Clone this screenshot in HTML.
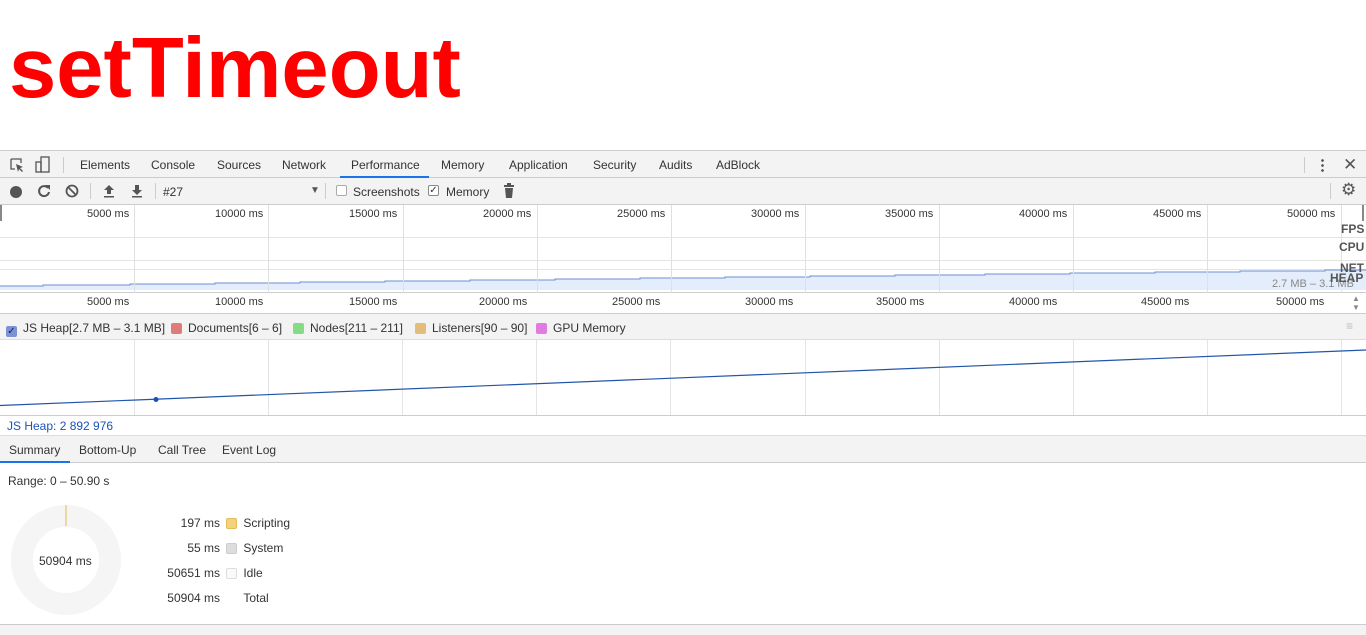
<!DOCTYPE html>
<html><head><meta charset="utf-8"><style>
*{margin:0;padding:0;box-sizing:border-box}
body{width:1366px;height:635px;overflow:hidden;background:#fff;font-family:"Liberation Sans",sans-serif;font-size:12px;color:#333;position:relative}
.abs{position:absolute}
h1{position:absolute;left:9px;top:19px;font-size:85px;font-weight:bold;color:#f00;line-height:100px;letter-spacing:0}
.bar{position:absolute;left:0;width:1366px;background:#f3f3f3;border-bottom:1px solid #ccc}
.tab{position:absolute;top:0;height:27px;line-height:27px;color:#333;font-size:12px}
.lbl{position:absolute;font-size:11px;color:#333}
.sw{display:inline-block;width:11px;height:11px;border-radius:2px;vertical-align:-2px;margin-right:6px}
</style></head><body>
<h1>setTimeout</h1>

<div class="bar" style="top:150px;height:28px;border-top:1px solid #ccc">
 <svg class="abs" style="left:9px;top:6px" width="16" height="16" viewBox="0 0 16 16"><path d="M2 2h10v4M2 2v10h4" fill="none" stroke="#555" stroke-width="1.3"/><path d="M7 7l7 3-3 1 3 3-1 1-3-3-1 3z" fill="#555"/></svg>
 <svg class="abs" style="left:35px;top:5px" width="16" height="18" viewBox="0 0 16 18"><rect x="6" y="1" width="8" height="15" fill="none" stroke="#555" stroke-width="1.3"/><rect x="1" y="6" width="5" height="10" fill="none" stroke="#555" stroke-width="1.3"/></svg>
 <div class="abs" style="left:63px;top:6px;width:1px;height:16px;background:#ccc"></div>
 <span class="tab" style="left:80px;top:1px">Elements</span>
 <span class="tab" style="left:151px;top:1px">Console</span>
 <span class="tab" style="left:217px;top:1px">Sources</span>
 <span class="tab" style="left:282px;top:1px">Network</span>
 <span class="tab" style="left:351px;top:1px">Performance</span>
 <div class="abs" style="left:340px;top:25px;width:89px;height:2px;background:#1a73e8"></div>
 <span class="tab" style="left:441px;top:1px">Memory</span>
 <span class="tab" style="left:509px;top:1px">Application</span>
 <span class="tab" style="left:593px;top:1px">Security</span>
 <span class="tab" style="left:659px;top:1px">Audits</span>
 <span class="tab" style="left:716px;top:1px">AdBlock</span>
 <div class="abs" style="left:1304px;top:6px;width:1px;height:16px;background:#ccc"></div>
 <div class="abs" style="left:1321px;top:7px;width:3px;height:14px;background:radial-gradient(circle,#555 1.2px,transparent 1.5px) 0 0/3px 5px"></div>
 <span class="tab" style="left:1343px;font-size:17px;color:#555">✕</span>
</div>

<div class="bar" style="top:178px;height:27px">
 <div class="abs" style="left:10px;top:8px;width:12px;height:12px;border-radius:50%;background:#555"></div>
 <svg class="abs" style="left:37px;top:6px" width="14" height="14" viewBox="0 0 14 14"><path d="M11 4A5 5 0 1 0 12 8" fill="none" stroke="#555" stroke-width="2"/><path d="M8 1h5v5z" fill="#555"/></svg>
 <svg class="abs" style="left:65px;top:6px" width="14" height="14" viewBox="0 0 14 14"><circle cx="7" cy="7" r="5.5" fill="none" stroke="#555" stroke-width="1.8"/><path d="M3 3l8 8" stroke="#555" stroke-width="1.8"/></svg>
 <div class="abs" style="left:90px;top:5px;width:1px;height:16px;background:#ccc"></div>
 <svg class="abs" style="left:103px;top:6px" width="12" height="14" viewBox="0 0 12 14"><path d="M6 1L1 6h3v4h4V6h3z M1 12h10v1.5H1z" fill="#555"/></svg>
 <svg class="abs" style="left:131px;top:6px" width="12" height="14" viewBox="0 0 12 14"><path d="M6 11L1 6h3V1h4v5h3z M1 12h10v1.5H1z" fill="#555"/></svg>
 <div class="abs" style="left:155px;top:5px;width:1px;height:16px;background:#ccc"></div>
 <span class="abs" style="left:163px;top:7px">#27</span>
 <span class="abs" style="left:310px;top:7px;font-size:10px;color:#555">▼</span>
 <div class="abs" style="left:325px;top:5px;width:1px;height:16px;background:#ccc"></div>
 <div class="abs" style="left:336px;top:7px;width:11px;height:11px;border:1px solid #aaa;border-radius:2px;background:#fff"></div>
 <span class="abs" style="left:353px;top:7px">Screenshots</span>
 <div class="abs" style="left:428px;top:7px;width:11px;height:11px;border:1px solid #888;border-radius:2px;background:#fff;font-size:10px;line-height:9px;text-align:center">✓</div>
 <span class="abs" style="left:446px;top:7px">Memory</span>
 <svg class="abs" style="left:503px;top:5px" width="12" height="15" viewBox="0 0 12 15"><path d="M1 2h10v2H1z M4 0h4v2H4z M2 5h8l-1 10H3z" fill="#555"/></svg>
 <div class="abs" style="left:1330px;top:5px;width:1px;height:16px;background:#ccc"></div>
 <span class="abs" style="left:1341px;top:2px;font-size:17px;color:#555">⚙</span>
</div>

<div class="abs" style="left:0;top:205px;width:1366px;height:88px;background:#fff">
 <svg class="abs" style="left:0;top:0" width="1366" height="88">
  <g stroke="#e4e4e4"><line x1="0" y1="32.5" x2="1366" y2="32.5"/><line x1="0" y1="55.5" x2="1366" y2="55.5"/><line x1="0" y1="64.5" x2="1366" y2="64.5"/></g>
  <polygon points="0,85 0,81 43,81 43,80 130,80 130,79 215,79 215,78 300,78 300,77 385,77 385,76 470,76 470,75 555,75 555,74 640,74 640,73 725,73 725,72 810,72 810,71 895,71 895,70 985,70 985,69 1070,69 1070,68 1155,68 1155,67 1240,67 1240,66 1325,66 1325,65 1366,65 1366,85" fill="#e3edfb" stroke="none"/>
  <polyline points="0,81 43,81 43,80 130,80 130,79 215,79 215,78 300,78 300,77 385,77 385,76 470,76 470,75 555,75 555,74 640,74 640,73 725,73 725,72 810,72 810,71 895,71 895,70 985,70 985,69 1070,69 1070,68 1155,68 1155,67 1240,67 1240,66 1325,66 1325,65 1366,65" fill="none" stroke="#6d8fd6" stroke-width="1"/>
  <line x1="0" y1="87.5" x2="1366" y2="87.5" stroke="#ccc"/>
  <g stroke="#e0e0e0"><line x1="134.5" y1="0" x2="134.5" y2="88"/><line x1="268.5" y1="0" x2="268.5" y2="88"/><line x1="403.5" y1="0" x2="403.5" y2="88"/><line x1="537.5" y1="0" x2="537.5" y2="88"/><line x1="671.5" y1="0" x2="671.5" y2="88"/><line x1="805.5" y1="0" x2="805.5" y2="88"/><line x1="939.5" y1="0" x2="939.5" y2="88"/><line x1="1073.5" y1="0" x2="1073.5" y2="88"/><line x1="1207.5" y1="0" x2="1207.5" y2="88"/><line x1="1341.5" y1="0" x2="1341.5" y2="88"/></g>
  <rect x="0" y="0" width="2" height="16" fill="#888"/><rect x="1362" y="0" width="2" height="16" fill="#888"/>
 </svg>
 <span class="lbl" style="left:87px;top:3px">5000 ms</span><span class="lbl" style="left:215px;top:3px">10000 ms</span><span class="lbl" style="left:349px;top:3px">15000 ms</span><span class="lbl" style="left:483px;top:3px">20000 ms</span><span class="lbl" style="left:617px;top:3px">25000 ms</span><span class="lbl" style="left:751px;top:3px">30000 ms</span><span class="lbl" style="left:885px;top:3px">35000 ms</span><span class="lbl" style="left:1019px;top:3px">40000 ms</span><span class="lbl" style="left:1153px;top:3px">45000 ms</span><span class="lbl" style="left:1287px;top:3px">50000 ms</span>
 <span class="abs" style="left:1341px;top:17px;font-size:12px;font-weight:bold;color:#555">FPS</span>
 <span class="abs" style="left:1339px;top:35px;font-size:12px;font-weight:bold;color:#555">CPU</span>
 <span class="abs" style="left:1340px;top:56px;font-size:12px;font-weight:bold;color:#555">NET</span>
 <span class="abs" style="left:1272px;top:73px;font-size:11px;color:#888;background:#e3edfb">2.7 MB – 3.1 MB</span>
 <span class="abs" style="left:1330px;top:66px;font-size:12px;font-weight:bold;color:#555">HEAP</span>
</div>
<div class="abs" style="left:0;top:293px;width:1366px;height:21px;background:#fff;border-bottom:1px solid #ccc">
 <span class="lbl" style="left:87px;top:3px">5000 ms</span><span class="lbl" style="left:215px;top:3px">10000 ms</span><span class="lbl" style="left:349px;top:3px">15000 ms</span><span class="lbl" style="left:479px;top:3px">20000 ms</span><span class="lbl" style="left:612px;top:3px">25000 ms</span><span class="lbl" style="left:745px;top:3px">30000 ms</span><span class="lbl" style="left:876px;top:3px">35000 ms</span><span class="lbl" style="left:1009px;top:3px">40000 ms</span><span class="lbl" style="left:1141px;top:3px">45000 ms</span><span class="lbl" style="left:1276px;top:3px">50000 ms</span>
 <span class="abs" style="left:1352px;top:1px;font-size:8px;color:#888;line-height:9px">▲<br>▼</span>
</div>

<div class="bar" style="top:314px;height:26px;border-bottom:1px solid #ddd">
 <span class="abs" style="left:6px;top:7px"><span class="sw" style="background:#7b93d6;color:#123;font-size:10px;line-height:11px;text-align:center">✓</span>JS Heap[2.7 MB – 3.1 MB]</span>
 <span class="abs" style="left:171px;top:7px"><span class="sw" style="background:#e07b7b"></span>Documents[6 – 6]</span>
 <span class="abs" style="left:293px;top:7px"><span class="sw" style="background:#86db86"></span>Nodes[211 – 211]</span>
 <span class="abs" style="left:415px;top:7px"><span class="sw" style="background:#e3bd7a"></span>Listeners[90 – 90]</span>
 <span class="abs" style="left:536px;top:7px"><span class="sw" style="background:#e07be0"></span>GPU Memory</span>
 <span class="abs" style="left:1346px;top:5px;color:#bbb">≡</span>
</div>

<svg class="abs" style="left:0;top:340px" width="1366" height="76">
 <g stroke="#e4e4e4"><line x1="134.5" y1="0" x2="134.5" y2="75"/><line x1="268.5" y1="0" x2="268.5" y2="75"/><line x1="402.5" y1="0" x2="402.5" y2="75"/><line x1="536.5" y1="0" x2="536.5" y2="75"/><line x1="670.5" y1="0" x2="670.5" y2="75"/><line x1="805.5" y1="0" x2="805.5" y2="75"/><line x1="939.5" y1="0" x2="939.5" y2="75"/><line x1="1073.5" y1="0" x2="1073.5" y2="75"/><line x1="1207.5" y1="0" x2="1207.5" y2="75"/><line x1="1341.5" y1="0" x2="1341.5" y2="75"/></g>
 <line x1="0" y1="65.5" x2="1366" y2="10" stroke="#2255aa" stroke-width="1.2"/>
 <circle cx="156" cy="59.5" r="2.5" fill="#1a4fbf"/>
 <line x1="0" y1="75.5" x2="1366" y2="75.5" stroke="#ccc"/>
</svg>
<span class="abs" style="left:7px;top:419px;color:#1a55b5;font-size:12px">JS Heap: 2 892 976</span>

<div class="bar" style="top:435px;height:28px;border-top:1px solid #ddd">
 <span class="tab" style="left:9px;top:1px">Summary</span>
 <div class="abs" style="left:0;top:25px;width:70px;height:2px;background:#1a73e8"></div>
 <span class="tab" style="left:79px;top:1px">Bottom-Up</span>
 <span class="tab" style="left:158px;top:1px">Call Tree</span>
 <span class="tab" style="left:222px;top:1px">Event Log</span>
</div>

<span class="abs" style="left:8px;top:474px">Range: 0 – 50.90 s</span>
<svg class="abs" style="left:9px;top:503px" width="114" height="114"><circle cx="57" cy="57" r="44" fill="none" stroke="#f5f5f5" stroke-width="22"/><line x1="57" y1="2" x2="57" y2="23" stroke="#e3c46a" stroke-width="1.2"/></svg>
<span class="abs" style="left:39px;top:554px">50904 ms</span>
<div class="abs" style="left:150px;top:511px;width:150px;line-height:25px">
 <div><span style="display:inline-block;width:70px;text-align:right">197 ms</span> <span class="sw" style="background:#f2d27a;border:1px solid #e3bd5a;margin-left:3px"></span>Scripting</div>
 <div><span style="display:inline-block;width:70px;text-align:right">55 ms</span> <span class="sw" style="background:#ddd;border:1px solid #ccc;margin-left:3px"></span>System</div>
 <div><span style="display:inline-block;width:70px;text-align:right">50651 ms</span> <span class="sw" style="background:#fafafa;border:1px solid #ddd;margin-left:3px"></span>Idle</div>
 <div><span style="display:inline-block;width:70px;text-align:right">50904 ms</span> <span style="margin-left:20px">Total</span></div>
</div>
<div class="abs" style="left:0;top:624px;width:1366px;height:11px;background:#f3f3f3;border-top:1px solid #ccc"></div>
</body></html>
